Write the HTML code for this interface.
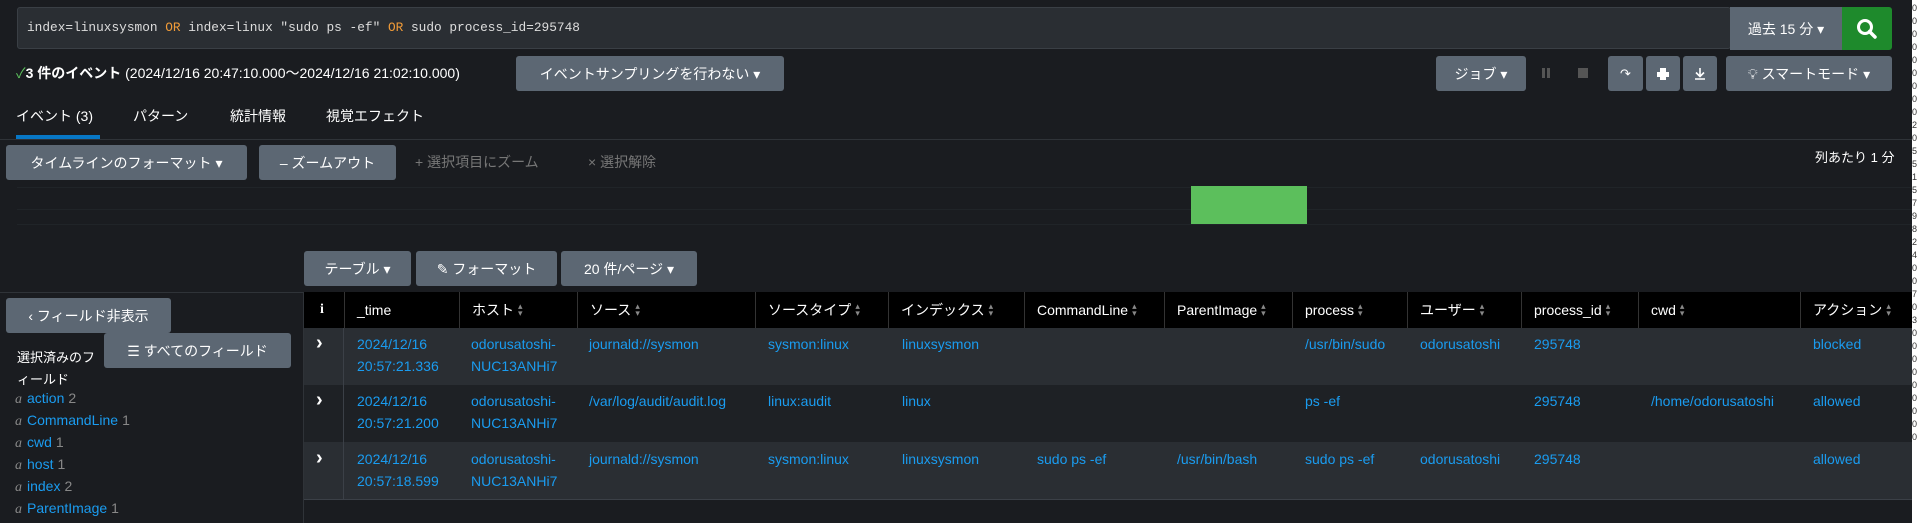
<!DOCTYPE html>
<html><head><meta charset="utf-8"><style>
*{margin:0;padding:0;box-sizing:border-box}
body{width:1921px;height:523px;background:#1a1c20;font-family:"Liberation Sans","Noto Sans CJK JP",sans-serif;color:#fff;position:relative;overflow:hidden;font-size:14px}
.a{position:absolute;white-space:nowrap}
.btn{position:absolute;background:#5c6773;border-radius:3px;color:#fff;font-size:14px;display:flex;align-items:center;justify-content:center;white-space:nowrap}
.th{position:absolute;top:292px;height:36px;display:flex;align-items:center;font-size:14px;border-left:1px solid #333;padding-left:12px}
.ar{color:#888;font-size:9px;margin-left:4px;line-height:7px}
.cell{position:absolute;color:#1a9cf0;font-size:14px;line-height:22px;white-space:nowrap}
.fl{position:absolute;left:15px;font-size:14px}
.fl i{color:#888;font-family:"Liberation Serif",serif;margin-right:5px}
.fl span{color:#1a9cf0}
.fl b{color:#888;font-weight:normal;margin-left:4px}
.chev{position:absolute;left:316px;font-size:20px;font-weight:bold;line-height:20px}
</style></head><body>
<div class="a" style="left:17px;top:7px;width:1714px;height:42px;background:#2a2e33;border:1px solid #3a3f45;border-radius:3px"></div>
<div class="a" style="left:27px;top:20px;font-family:'Liberation Mono',monospace;font-size:12.8px;color:#ddd">index=linuxsysmon <span style="color:#f29c38">OR</span> index=linux "sudo ps -ef" <span style="color:#f29c38">OR</span> sudo process_id=295748</div>
<div class="btn" style="left:1730px;top:7px;width:112px;height:43px;border-radius:0">過去 15 分 ▾</div>
<div class="btn" style="left:1842px;top:7px;width:50px;height:43px;background:#1e8a2c;border-radius:0 3px 3px 0"><svg width="22" height="22" viewBox="0 0 22 22"><circle cx="9" cy="9" r="6.5" stroke="#fff" stroke-width="3" fill="none"/><path d="M13.5 13.5 L19 19" stroke="#fff" stroke-width="3.5" stroke-linecap="round"/></svg></div>
<div class="a" style="left:16px;top:63px;font-size:14px"><span style="color:#5cc05c">✓</span><b>3 件のイベント</b> (2024/12/16 20:47:10.000～2024/12/16 21:02:10.000)</div>
<div class="btn" style="left:516px;top:56px;width:268px;height:35px">イベントサンプリングを行わない ▾</div>
<div class="btn" style="left:1436px;top:56px;width:90px;height:35px">ジョブ ▾</div>
<div class="a" style="left:1542px;top:68px;width:3px;height:10px;background:#555;box-shadow:5px 0 0 #555"></div>
<div class="a" style="left:1578px;top:68px;width:10px;height:10px;background:#555"></div>
<div class="btn" style="left:1608px;top:56px;width:35px;height:35px;font-size:13px">↷</div>
<div class="btn" style="left:1646px;top:56px;width:34px;height:35px"><svg width="12" height="12"><rect x="3" y="0" width="6" height="4" fill="#fff"/><rect x="0" y="4" width="12" height="5" fill="#fff"/><rect x="3" y="8" width="6" height="4" fill="#fff"/></svg></div>
<div class="btn" style="left:1683px;top:56px;width:34px;height:35px"><svg width="12" height="12"><path d="M6 0V8M2 4.5L6 8.5L10 4.5M1 11H11" stroke="#fff" stroke-width="1.6" fill="none"/></svg></div>
<div class="btn" style="left:1726px;top:56px;width:166px;height:35px">💡&#xFE0E; スマートモード ▾</div>
<div class="a" style="left:16px;top:106px;font-size:14px">イベント (3)</div>
<div class="a" style="left:133px;top:106px;font-size:14px">パターン</div>
<div class="a" style="left:230px;top:106px;font-size:14px">統計情報</div>
<div class="a" style="left:326px;top:106px;font-size:14px">視覚エフェクト</div>
<div class="a" style="left:16px;top:135px;width:84px;height:4px;background:#0877c5"></div>
<div class="a" style="left:0;top:139px;width:1912px;height:1px;background:#2f3338"></div>
<div class="btn" style="left:6px;top:145px;width:241px;height:35px">タイムラインのフォーマット ▾</div>
<div class="btn" style="left:259px;top:145px;width:137px;height:35px">– ズームアウト</div>
<div class="a" style="left:415px;top:152px;color:#777">+ 選択項目にズーム</div>
<div class="a" style="left:588px;top:152px;color:#777">× 選択解除</div>
<div class="a" style="left:1815px;top:147px;font-size:13px">列あたり 1 分</div>
<div class="a" style="left:17px;top:187px;width:1895px;height:1px;background:#202428"></div>
<div class="a" style="left:17px;top:209px;width:1895px;height:1px;background:#202428"></div>
<div class="a" style="left:17px;top:224px;width:1895px;height:1px;background:#202428"></div>
<div class="a" style="left:1191px;top:186px;width:116px;height:38px;background:#5cbf5c"></div>
<div class="btn" style="left:304px;top:251px;width:107px;height:35px">テーブル ▾</div>
<div class="btn" style="left:416px;top:251px;width:141px;height:35px">✎ フォーマット</div>
<div class="btn" style="left:561px;top:251px;width:136px;height:35px">20 件/ページ ▾</div>
<div class="a" style="left:0;top:292px;width:1912px;height:1px;background:#2f3338"></div>
<div class="a" style="left:303px;top:292px;width:1px;height:231px;background:#2f3338"></div>
<div class="btn" style="left:6px;top:298px;width:165px;height:35px">‹ フィールド非表示</div>
<div class="a" style="left:17px;top:347px;font-size:13px;line-height:22px">選択済みのフ<br>ィールド</div>
<div class="btn" style="left:104px;top:333px;width:187px;height:35px">☰ すべてのフィールド</div>
<div class="fl" style="top:390px"><i>a</i><span>action</span><b>2</b></div>
<div class="fl" style="top:412px"><i>a</i><span>CommandLine</span><b>1</b></div>
<div class="fl" style="top:434px"><i>a</i><span>cwd</span><b>1</b></div>
<div class="fl" style="top:456px"><i>a</i><span>host</span><b>1</b></div>
<div class="fl" style="top:478px"><i>a</i><span>index</span><b>2</b></div>
<div class="fl" style="top:500px"><i>a</i><span>ParentImage</span><b>1</b></div>
<div class="a" style="left:304px;top:292px;width:1608px;height:36px;background:#000"></div>
<div class="a" style="left:304px;top:328px;width:1608px;height:57px;background:#2a2e33"></div>
<div class="a" style="left:304px;top:385px;width:1608px;height:57px;background:#1e2125"></div>
<div class="a" style="left:304px;top:442px;width:1608px;height:57px;background:#2a2e33"></div>
<div class="a" style="left:304px;top:499px;width:1608px;height:1px;background:#3b4047"></div>
<div class="a" style="left:343px;top:328px;width:1px;height:171px;background:#3b4047"></div>
<div class="th" style="left:304px;width:40px;border:none;font-weight:bold;font-family:'Liberation Serif',serif;padding-left:16px">i</div>
<div class="th" style="left:344px">_time</div>
<div class="th" style="left:459px">ホスト<span class="ar">▴<br>▾</span></div>
<div class="th" style="left:577px">ソース<span class="ar">▴<br>▾</span></div>
<div class="th" style="left:755px">ソースタイプ<span class="ar">▴<br>▾</span></div>
<div class="th" style="left:888px">インデックス<span class="ar">▴<br>▾</span></div>
<div class="th" style="left:1024px">CommandLine<span class="ar">▴<br>▾</span></div>
<div class="th" style="left:1164px">ParentImage<span class="ar">▴<br>▾</span></div>
<div class="th" style="left:1292px">process<span class="ar">▴<br>▾</span></div>
<div class="th" style="left:1407px">ユーザー<span class="ar">▴<br>▾</span></div>
<div class="th" style="left:1521px">process_id<span class="ar">▴<br>▾</span></div>
<div class="th" style="left:1638px">cwd<span class="ar">▴<br>▾</span></div>
<div class="th" style="left:1800px">アクション<span class="ar">▴<br>▾</span></div>
<div class="chev" style="top:333px">›</div>
<div class="chev" style="top:390px">›</div>
<div class="chev" style="top:448px">›</div>
<div class="cell" style="left:357px;top:333px">2024/12/16<br>20:57:21.336</div>
<div class="cell" style="left:471px;top:333px">odorusatoshi-<br>NUC13ANHi7</div>
<div class="cell" style="left:589px;top:333px">journald://sysmon</div>
<div class="cell" style="left:768px;top:333px">sysmon:linux</div>
<div class="cell" style="left:902px;top:333px">linuxsysmon</div>
<div class="cell" style="left:1305px;top:333px">/usr/bin/sudo</div>
<div class="cell" style="left:1420px;top:333px">odorusatoshi</div>
<div class="cell" style="left:1534px;top:333px">295748</div>
<div class="cell" style="left:1813px;top:333px">blocked</div>
<div class="cell" style="left:357px;top:390px">2024/12/16<br>20:57:21.200</div>
<div class="cell" style="left:471px;top:390px">odorusatoshi-<br>NUC13ANHi7</div>
<div class="cell" style="left:589px;top:390px">/var/log/audit/audit.log</div>
<div class="cell" style="left:768px;top:390px">linux:audit</div>
<div class="cell" style="left:902px;top:390px">linux</div>
<div class="cell" style="left:1305px;top:390px">ps -ef</div>
<div class="cell" style="left:1534px;top:390px">295748</div>
<div class="cell" style="left:1651px;top:390px">/home/odorusatoshi</div>
<div class="cell" style="left:1813px;top:390px">allowed</div>
<div class="cell" style="left:357px;top:448px">2024/12/16<br>20:57:18.599</div>
<div class="cell" style="left:471px;top:448px">odorusatoshi-<br>NUC13ANHi7</div>
<div class="cell" style="left:589px;top:448px">journald://sysmon</div>
<div class="cell" style="left:768px;top:448px">sysmon:linux</div>
<div class="cell" style="left:902px;top:448px">linuxsysmon</div>
<div class="cell" style="left:1037px;top:448px">sudo ps -ef</div>
<div class="cell" style="left:1177px;top:448px">/usr/bin/bash</div>
<div class="cell" style="left:1305px;top:448px">sudo ps -ef</div>
<div class="cell" style="left:1420px;top:448px">odorusatoshi</div>
<div class="cell" style="left:1534px;top:448px">295748</div>
<div class="cell" style="left:1813px;top:448px">allowed</div>
<div class="a" style="left:1912px;top:0;width:9px;height:523px;background:#fff"></div>
<div class="a" style="left:1912px;top:2px;width:9px;height:440px;color:#333;font-size:9px;line-height:13px;overflow:hidden">0<br>0<br>0<br>0<br>0<br>0<br>0<br>0<br>0<br>2<br>0<br>5<br>5<br>1<br>5<br>7<br>9<br>8<br>2<br>4<br>0<br>0<br>7<br>0<br>3<br>0<br>0<br>0<br>0<br>0<br>0<br>0<br>0<br>0</div>
</body></html>
